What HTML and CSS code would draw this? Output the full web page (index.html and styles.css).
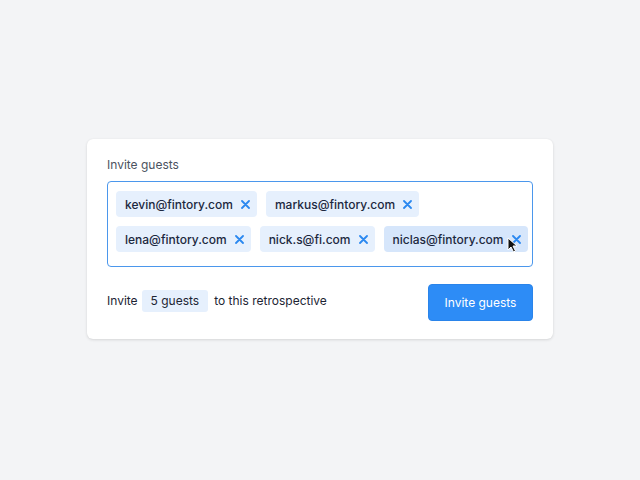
FILE: index.html
```html
<!DOCTYPE html>
<html>
<head>
<meta charset="utf-8">
<link rel="stylesheet" href="styles.css">
</head>
<body>
<div class="page">
  <div class="card">
    <div class="label">Invite guests</div>
    <div class="input">
      <div class="row">
        <span class="chip">kevin@fintory.com<span class="x"><svg width="9" height="9" viewBox="0 0 9 9"><path d="M1 1L8 8M8 1L1 8" stroke="#2b88f0" stroke-width="1.8" stroke-linecap="round"/></svg></span></span>
        <span class="chip">markus@fintory.com<span class="x"><svg width="9" height="9" viewBox="0 0 9 9"><path d="M1 1L8 8M8 1L1 8" stroke="#2b88f0" stroke-width="1.8" stroke-linecap="round"/></svg></span></span>
      </div>
      <div class="row">
        <span class="chip">lena@fintory.com<span class="x"><svg width="9" height="9" viewBox="0 0 9 9"><path d="M1 1L8 8M8 1L1 8" stroke="#2b88f0" stroke-width="1.8" stroke-linecap="round"/></svg></span></span>
        <span class="chip">nick.s@fi.com<span class="x"><svg width="9" height="9" viewBox="0 0 9 9"><path d="M1 1L8 8M8 1L1 8" stroke="#2b88f0" stroke-width="1.8" stroke-linecap="round"/></svg></span></span>
        <span class="chip hover">niclas@fintory.com<span class="x"><svg width="9" height="9" viewBox="0 0 9 9"><path d="M1 1L8 8M8 1L1 8" stroke="#2b88f0" stroke-width="1.8" stroke-linecap="round"/></svg></span>
          <svg class="cursor" width="11" height="16" viewBox="0 0 11 16"><path d="M1 1L1 13L4 10L6.5 15L8.5 14L6 9L10 9Z" fill="#111" stroke="#fff" stroke-width="1" stroke-linejoin="round"/></svg>
        </span>
      </div>
    </div>
    <div class="footer">
      <div class="summary">Invite <span class="count">5 guests</span> to this retrospective</div>
      <button class="btn">Invite guests</button>
    </div>
  </div>
</div>
</body>
</html>
```
FILE: styles.css
```css
html, body {
  margin: 0;
  padding: 0;
  background: #f3f4f6;
  font-family: Inter, "Noto Sans", sans-serif;
}
.page {
  width: 640px;
  height: 480px;
  display: flex;
  justify-content: center;
  padding-top: 139px;
  box-sizing: border-box;
}
.card {
  width: 466px;
  height: 200px;
  box-sizing: border-box;
  background: #fff;
  border-radius: 6px;
  box-shadow: 0 1px 3px rgba(0, 0, 0, 0.12), 0 0 1px rgba(0, 0, 0, 0.06);
  padding: 18px 20px 18px 20px;
}
.label {
  font-size: 12px;
  color: #4b5260;
  line-height: 16px;
  margin-bottom: 8px;
}
.input {
  border: 1px solid #4b97ec;
  border-radius: 4px;
  padding: 9px 8px 14px 8px;
  display: flex;
  flex-direction: column;
  gap: 9px;
}
.row {
  display: flex;
  gap: 9px;
}
.chip {
  position: relative;
  display: inline-flex;
  align-items: center;
  height: 26px;
  padding: 0 7px 0 9px;
  background: #e6f0fd;
  border-radius: 4px;
  font-size: 12px;
  font-weight: 500;
  color: #1c2840;
}
.chip.hover {
  background: #d6e6fb;
}
.x {
  display: inline-flex;
  margin-left: 8px;
}
.cursor {
  position: absolute;
  left: 123px;
  top: 11px;
}
.footer {
  display: flex;
  justify-content: space-between;
  align-items: center;
  margin-top: 17px;
}
.summary {
  font-size: 12px;
  color: #1c2433;
  display: flex;
  align-items: center;
  margin-top: -4px;
}
.count {
  display: inline-block;
  background: #e6f0fd;
  border-radius: 3px;
  padding: 0 9px;
  height: 22px;
  line-height: 22px;
  margin: 0 6px 0 4px;
}
.btn {
  width: 105px;
  height: 37px;
  background: #2d8cf6;
  border: 1px solid #2a84ea;
  border-radius: 4px;
  color: #fff;
  font-family: Inter, "Noto Sans", sans-serif;
  font-size: 12px;
  padding: 0;
}
```
